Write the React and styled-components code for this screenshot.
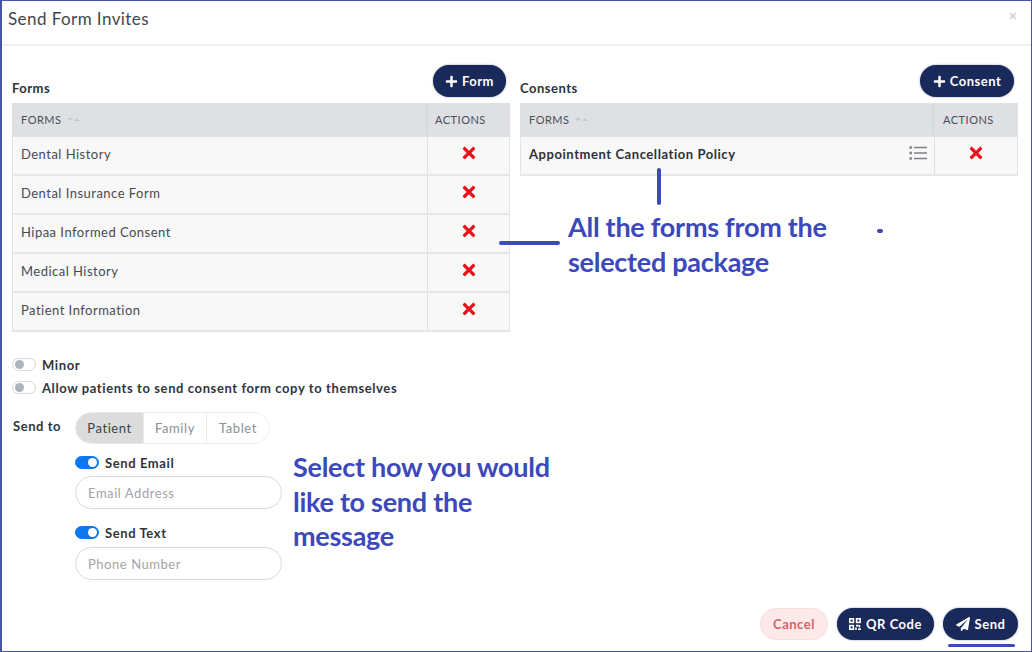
import React from "react";
import styled, { createGlobalStyle } from "styled-components";
import { FaPlus, FaTimes, FaPaperPlane } from "react-icons/fa";

const GlobalStyle = createGlobalStyle`
  html, body {
    margin: 0;
    padding: 0;
    background: #fff;
  }
  * {
    box-sizing: border-box;
  }
`;

const Modal = styled.div`
  position: relative;
  width: 1032px;
  height: 652px;
  overflow: hidden;
  background: #fff;
  color: #333a45;
  font-family: "Lato", "Open Sans", sans-serif;
  border: 1px solid #4a54a6;
  border-left-width: 2px;
`;

const Header = styled.div`
  display: flex;
  justify-content: space-between;
  height: 45px;
  padding: 8px 13px 0 6px;
  border-bottom: 2px solid #f0f0f0;
`;

const Title = styled.div`
  font-size: 17px;
  line-height: 20px;
  letter-spacing: 0.43px;
  color: #3f4650;
`;

const Close = styled.div`
  color: #d5d7da;
  font-size: 10px;
  line-height: 10px;
  padding-top: 2px;
`;

const Body = styled.div`
  padding: 19px 13px 0 10px;
`;

const Tables = styled.div`
  display: grid;
  grid-template-columns: 498px 498px;
  column-gap: 10px;
`;

const TableHead = styled.div`
  display: flex;
  justify-content: space-between;
  align-items: flex-end;
  height: 38px;
  padding: 0 4px 0 0;
`;

const Heading = styled.div`
  font-size: 13px;
  font-weight: 700;
  letter-spacing: 0.5px;
  color: #2c323a;
  line-height: 16px;
  margin-bottom: 7px;
`;

const DarkButton = styled.button`
  display: inline-flex;
  align-items: center;
  justify-content: center;
  gap: ${(p) => p.$gap || 4}px;
  height: 32px;
  width: ${(p) => p.$w}px;
  margin-bottom: ${(p) => p.$mb || 0}px;
  padding: 0;
  border: none;
  border-radius: 16px;
  background: #19295a;
  color: #fff;
  font-family: inherit;
  font-size: 13px;
  font-weight: 700;
  letter-spacing: 0.5px;
  box-shadow: 0 0 2px rgba(25, 41, 90, 0.5);
`;

const Table = styled.div`
  border: 1px solid #e3e4e6;
  border-top: none;
  border-bottom: none;
`;

const columns = (p) => (p.$wide ? "413px 1fr" : "414px 1fr");

const HeadRow = styled.div`
  display: grid;
  grid-template-columns: ${columns};
  height: 34px;
  margin: 0 -1px;
  padding-bottom: 2px;
  background: #dfe0e3;
  font-size: 11px;
  letter-spacing: 0.5px;
  color: #4a4f57;
`;

const HeadCell = styled.div`
  display: flex;
  align-items: center;
  gap: 5px;
  padding-left: ${(p) => p.$pad || 9}px;
  border-left: ${(p) => (p.$divider ? "1px solid #d4d5d8" : "none")};
`;

const SortMark = styled.span`
  display: inline-flex;
  align-items: center;
  gap: 1px;
  margin-top: 1px;

  &::before,
  &::after {
    content: "";
    border-left: 3.5px solid transparent;
    border-right: 3.5px solid transparent;
  }
  &::before {
    border-top: 3px solid #c6c8cc;
  }
  &::after {
    border-bottom: 3px solid #c6c8cc;
  }
`;

const Row = styled.div`
  display: grid;
  grid-template-columns: ${columns};
  height: 39px;
  background: #f8f8f8;
  border-bottom: 2px solid #e5e6e7;
`;

const NameCell = styled.div`
  display: flex;
  align-items: center;
  justify-content: space-between;
  padding: 0 7px 3px 8px;
  font-size: 13px;
  font-weight: ${(p) => (p.$bold ? 700 : 400)};
  letter-spacing: ${(p) => (p.$bold ? 0.56 : 0.48)}px;
  color: ${(p) => (p.$bold ? "#2c323a" : "#454b54")};
`;

const ActionCell = styled.div`
  display: flex;
  align-items: center;
  justify-content: center;
  padding-bottom: 6px;
  border-left: 1px solid #dfe0e2;
  color: #ea0f18;
  font-size: 18px;
`;

const Options = styled.div`
  margin-top: 26px;
  display: flex;
  flex-direction: column;
  gap: 10px;
`;

const SwitchRow = styled.div`
  display: flex;
  align-items: center;
  gap: 6px;
  height: 13px;
  font-size: 13px;
  font-weight: 700;
  letter-spacing: 0.6px;
  color: #2f353d;
`;

const Track = styled.span`
  position: relative;
  display: inline-block;
  width: 24px;
  height: 13px;
  border-radius: 7px;
  background: ${(p) => (p.$on ? "#0d78ee" : "#fff")};
  border: 1px solid ${(p) => (p.$on ? "#0d78ee" : "#d6d8db")};

  &::after {
    content: "";
    position: absolute;
    top: 1px;
    left: ${(p) => (p.$on ? "12px" : "2px")};
    width: 9px;
    height: 9px;
    border-radius: 50%;
    background: ${(p) => (p.$on ? "#fff" : "#adb3bc")};
  }
`;

const SendGrid = styled.div`
  display: grid;
  grid-template-columns: 63px 1fr;
  margin-top: 18px;
`;

const SendLabel = styled.div`
  font-size: 13px;
  font-weight: 700;
  letter-spacing: 0.55px;
  line-height: 16px;
  padding: 6px 0 0 1px;
  color: #2f353d;
`;

const Segments = styled.div`
  display: inline-flex;
  height: 32px;
  border: 1px solid #e9eaeb;
  border-radius: 16px;
  overflow: hidden;
`;

const Segment = styled.div`
  display: flex;
  align-items: center;
  justify-content: center;
  width: ${(p) => p.$w}px;
  font-size: 13px;
  letter-spacing: 0.55px;
  background: ${(p) => (p.$active ? "#dcdcdc" : "#fff")};
  color: ${(p) => (p.$active ? "#3c4249" : "#8b9097")};
  border-left: ${(p) => (p.$first ? "none" : "1px solid #e9eaeb")};
`;

const Field = styled.div`
  margin-top: ${(p) => p.$top}px;
  width: 207px;
`;

const Input = styled.input`
  display: block;
  width: 207px;
  height: 33px;
  margin-top: ${(p) => p.$gap}px;
  padding: 0 12px;
  border: 1px solid #d9dadc;
  border-radius: 17px;
  background: #fff;
  font-family: inherit;
  font-size: 13px;
  letter-spacing: 0.55px;
  outline: none;

  &::placeholder {
    color: #a1a4a9;
    opacity: 1;
  }
`;

const Footer = styled.div`
  position: absolute;
  right: 13px;
  bottom: 11px;
  display: flex;
  gap: 9px;
`;

const CancelButton = styled.button`
  height: 32px;
  width: 68px;
  padding: 0;
  border: 1px solid #f7dcdc;
  border-radius: 16px;
  background: #fde9e9;
  color: #dc6166;
  font-family: inherit;
  font-size: 13px;
  font-weight: 700;
  letter-spacing: 0.5px;
`;

const Note = styled.div`
  position: absolute;
  left: ${(p) => p.$x}px;
  top: ${(p) => p.$y}px;
  width: ${(p) => p.$w}px;
  font-family: "Lato", "Open Sans", sans-serif;
  font-size: 27px;
  font-weight: 700;
  letter-spacing: -0.27px;
  line-height: 34.5px;
  color: #3c48bb;
`;

const Mark = styled.div`
  position: absolute;
  left: ${(p) => p.$x}px;
  top: ${(p) => p.$y}px;
  width: ${(p) => p.$w}px;
  height: ${(p) => p.$h}px;
  border-radius: 2px;
  background: #3c48bb;
`;

const ListSvg = styled.svg`
  margin-top: -3px;
`;

const QrIcon = () => (
  <svg width="12" height="12" viewBox="0 0 12 12" fill="none" stroke="#fff" strokeWidth="1.6">
    <rect x="0.8" y="0.8" width="3.6" height="3.6" />
    <rect x="7.6" y="0.8" width="3.6" height="3.6" />
    <rect x="0.8" y="7.6" width="3.6" height="3.6" />
    <path d="M7 7.6h2.4M10.4 7v2.4M7 9.4v2.6M9 11.2h3" />
  </svg>
);

const ListIcon = () => (
  <ListSvg width="18" height="14" viewBox="0 0 18 14" fill="none" stroke="#7d8187" strokeWidth="1.6">
    <path d="M5 1.5h13M5 7h13M5 12.5h13" />
    <path d="M0.5 1.5h2.4M0.5 7h2.4M0.5 12.5h2.4" strokeWidth="2.6" />
  </ListSvg>
);

const forms = [
  "Dental History",
  "Dental Insurance Form",
  "Hipaa Informed Consent",
  "Medical History",
  "Patient Information",
];

const App = () => (
  <>
    <GlobalStyle />
    <Modal>
      <Header>
        <Title>Send Form Invites</Title>
        <Close>
          <FaTimes />
        </Close>
      </Header>
      <Body>
        <Tables>
          <div>
            <TableHead>
              <Heading>Forms</Heading>
              <DarkButton $w={73} $mb={6}>
                <FaPlus size={13} /> Form
              </DarkButton>
            </TableHead>
            <Table>
              <HeadRow>
                <HeadCell>
                  FORMS <SortMark />
                </HeadCell>
                <HeadCell $divider $pad={8}>ACTIONS</HeadCell>
              </HeadRow>
              {forms.map((name) => (
                <Row key={name}>
                  <NameCell>{name}</NameCell>
                  <ActionCell>
                    <FaTimes />
                  </ActionCell>
                </Row>
              ))}
            </Table>
          </div>
          <div>
            <TableHead>
              <Heading>Consents</Heading>
              <DarkButton $w={94} $mb={6}>
                <FaPlus size={13} /> Consent
              </DarkButton>
            </TableHead>
            <Table>
              <HeadRow $wide>
                <HeadCell>
                  FORMS <SortMark />
                </HeadCell>
                <HeadCell $divider $pad={9}>ACTIONS</HeadCell>
              </HeadRow>
              <Row $wide>
                <NameCell $bold>
                  Appointment Cancellation Policy
                  <ListIcon />
                </NameCell>
                <ActionCell>
                  <FaTimes />
                </ActionCell>
              </Row>
            </Table>
          </div>
        </Tables>

        <Options>
          <SwitchRow>
            <Track />
            Minor
          </SwitchRow>
          <SwitchRow>
            <Track />
            Allow patients to send consent form copy to themselves
          </SwitchRow>
        </Options>

        <SendGrid>
          <SendLabel>Send to</SendLabel>
          <div>
            <Segments>
              <Segment $w={67} $active $first>
                Patient
              </Segment>
              <Segment $w={63}>Family</Segment>
              <Segment $w={63}>Tablet</Segment>
            </Segments>
            <Field $top={12}>
              <SwitchRow $on>
                <Track $on />
                Send Email
              </SwitchRow>
              <Input $gap={7} placeholder="Email Address" />
            </Field>
            <Field $top={17}>
              <SwitchRow $on>
                <Track $on />
                Send Text
              </SwitchRow>
              <Input $gap={8} placeholder="Phone Number" />
            </Field>
          </div>
        </SendGrid>
      </Body>

      <Footer>
        <CancelButton>Cancel</CancelButton>
        <DarkButton $w={97} $gap={5}>
          <QrIcon /> QR Code
        </DarkButton>
        <DarkButton $w={75} $gap={5}>
          <FaPaperPlane size={14} /> Send
        </DarkButton>
      </Footer>

      <Note $x={566} $y={209} $w={300}>
        All the forms from the selected package
      </Note>
      <Note $x={291} $y={449} $w={280}>
        Select how you would like to send the message
      </Note>
      <Mark $x={497} $y={240} $w={61} $h={4} />
      <Mark $x={655} $y={167} $w={4} $h={37} />
      <Mark $x={875} $y={228} $w={6} $h={4} />
      <Mark $x={946} $y={643} $w={67} $h={3} />
    </Modal>
  </>
);

export default App;
